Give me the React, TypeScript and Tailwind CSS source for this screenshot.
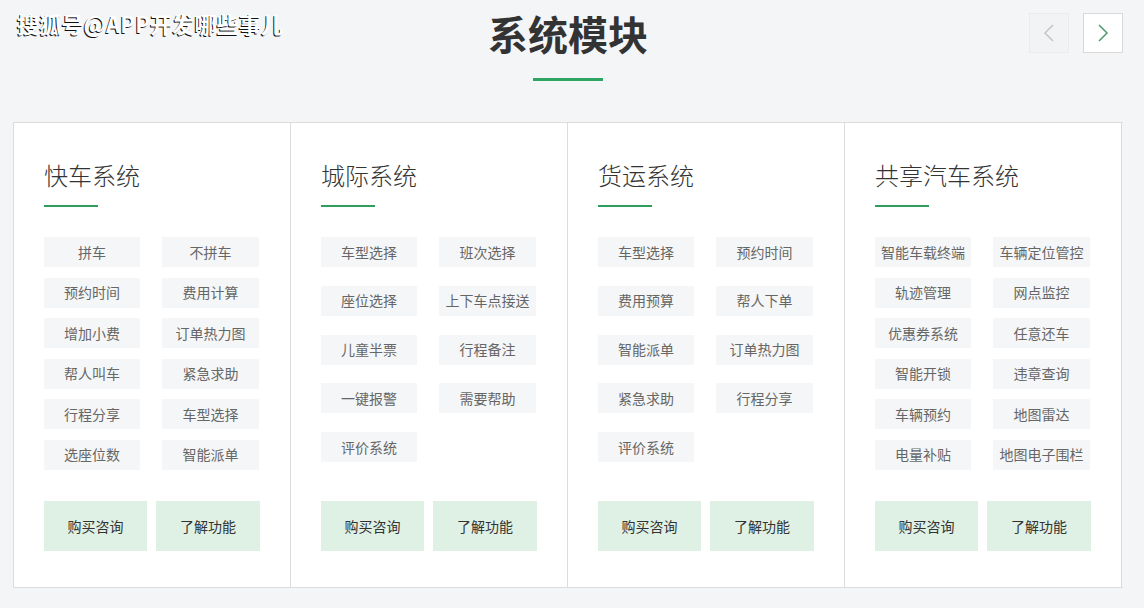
import React from "react";

const FONT = { fontFamily: '"Noto Sans CJK SC", "Noto Sans", sans-serif' };

type Col = { title: string; tags: string[]; gap: string };

const cols: Col[] = [
  {
    title: "快车系统",
    tags: ["拼车", "不拼车", "预约时间", "费用计算", "增加小费", "订单热力图", "帮人叫车", "紧急求助", "行程分享", "车型选择", "选座位数", "智能派单"],
    gap: "gap-y-[10.6px]",
  },
  {
    title: "城际系统",
    tags: ["车型选择", "班次选择", "座位选择", "上下车点接送", "儿童半票", "行程备注", "一键报警", "需要帮助", "评价系统"],
    gap: "gap-y-[18.75px]",
  },
  {
    title: "货运系统",
    tags: ["车型选择", "预约时间", "费用预算", "帮人下单", "智能派单", "订单热力图", "紧急求助", "行程分享", "评价系统"],
    gap: "gap-y-[18.75px]",
  },
  {
    title: "共享汽车系统",
    tags: ["智能车载终端", "车辆定位管控", "轨迹管理", "网点监控", "优惠券系统", "任意还车", "智能开锁", "违章查询", "车辆预约", "地图雷达", "电量补贴", "地图电子围栏"],
    gap: "gap-y-[10.6px]",
  },
];

function Column({ col, last }: { col: Col; last: boolean }) {
  return (
    <div
      className={
        "shrink-0 border-l border-[#dcdcdc] bg-white pl-[30px] pt-[38px] pb-[36px] flex flex-col " +
        (last ? "border-r w-[278px]" : "w-[277px]")
      }
    >
      <div className="text-[24px] leading-[28px] text-[#333] font-light">{col.title}</div>
      <div className="mt-[16px] h-[2px] w-[54px] bg-[#2f9e5c]" />
      <div className={"mt-[30px] grid grid-cols-[96px_97px] gap-x-[22px] " + col.gap}>
        {col.tags.map((t, i) => (
          <div
            key={i}
            className="h-[30px] bg-[#f5f6f7] text-[14px] text-[#666] flex items-center justify-center whitespace-nowrap"
          >
            {t}
          </div>
        ))}
      </div>
      <div className="mt-auto flex gap-[9px]">
        <div className="w-[103px] h-[50px] bg-[#dff0e5] text-[14px] text-[#333] flex items-center justify-center">
          购买咨询
        </div>
        <div className="w-[104px] h-[50px] bg-[#dff0e5] text-[14px] text-[#333] flex items-center justify-center">
          了解功能
        </div>
      </div>
    </div>
  );
}

export default function App() {
  return (
    <div className="relative w-[1144px] h-[608px] bg-[#f4f5f7] overflow-hidden" style={FONT}>
      <div className="absolute left-[17px] top-[8px] text-[22px] leading-[30px] font-bold text-white tracking-[0.2px] [text-shadow:-1px_1px_0_#111]">
        搜狐号@APP开发哪些事儿
      </div>
      <div className="ml-[13px] w-[1110px]">
        <div className="h-[122px] grid grid-cols-[1fr_auto_1fr]">
          <div />
          <div className="flex flex-col items-center pt-[11px]">
            <div className="text-[40px] leading-[44px] font-bold text-[#333]">系统模块</div>
            <div className="mt-[23px] h-[3px] w-[70px] bg-[#2fa563]" />
          </div>
          <div className="flex justify-end items-start pt-[13px] gap-[14px]">
            <div className="w-[40px] h-[40px] bg-[#f2f3f5] border border-[#ebebeb] flex items-center justify-center">
              <svg width="12" height="20" viewBox="0 0 12 20" fill="none">
                <polyline points="10,2 2,10 10,18" stroke="#c4c4c4" strokeWidth="1.5" />
              </svg>
            </div>
            <div className="w-[40px] h-[40px] bg-white border border-[#d8d8d8] flex items-center justify-center">
              <svg width="12" height="20" viewBox="0 0 12 20" fill="none">
                <polyline points="2,2 10,10 2,18" stroke="#4a9a70" strokeWidth="1.5" />
              </svg>
            </div>
          </div>
        </div>
        <div className="flex h-[466px] border-t border-b border-[#dcdcdc]">
          {cols.map((c, i) => (
            <Column key={i} col={c} last={i === cols.length - 1} />
          ))}
        </div>
      </div>
    </div>
  );
}
